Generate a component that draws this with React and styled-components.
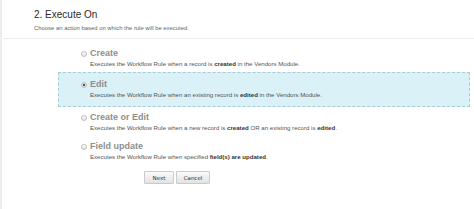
import React, { useState } from "react";
import styled, { createGlobalStyle } from "styled-components";

const GlobalStyle = createGlobalStyle`
  html, body {
    margin: 0;
    padding: 0;
    background: #ffffff;
  }
  body {
    font-family: "Liberation Sans", Arial, sans-serif;
    width: 474px;
    height: 209px;
    overflow: hidden;
  }
`;

const Page = styled.div`
  height: 209px;
  box-sizing: border-box;
  border-left: 2px solid #ededed;
  padding-top: 9px;
`;

const Header = styled.div`
  padding-left: 31px;
  padding-bottom: 6px;
  border-bottom: 1px solid #ececec;
  margin-left: 1px;
`;

const Title = styled.h2`
  margin: 0;
  font-size: 10px;
  line-height: 12px;
  font-weight: normal;
  color: #2a2a2a;
`;

const Subtitle = styled.p`
  margin: 3px 0 0;
  font-size: 5.9px;
  line-height: 8px;
  color: #666;
`;

const Options = styled.div`
  margin: 4px 4px 0 56px;
  display: flex;
  flex-direction: column;
`;

const Option = styled.label`
  display: block;
  position: relative;
  box-sizing: border-box;
  padding: ${(p) => (p.$active ? "6px 0 7px 31px" : "4px 0 3px 31px")};
  border: 1px dashed ${(p) => (p.$active ? "#a9cbd4" : "transparent")};
  background: ${(p) => (p.$active ? "#d9f1f7" : "transparent")};
  cursor: pointer;
`;

const Radio = styled.span`
  position: absolute;
  left: 22px;
  top: ${(p) => (p.$checked ? 9 : 7)}px;
  width: 4px;
  height: 4px;
  border-radius: 50%;
  border: 1px solid #bdbdbd;
  background: ${(p) =>
    p.$checked
      ? "radial-gradient(circle, #555 0 1.2px, #e8e8e8 1.6px)"
      : "linear-gradient(#ffffff, #e4e4e4)"};
`;

const Label = styled.div`
  font-size: 9px;
  line-height: 11px;
  font-weight: bold;
  color: #8e8e8e;
`;

const Desc = styled.div`
  margin-top: 1px;
  font-size: 6.1px;
  line-height: 8px;
  color: #555;

  b {
    color: #333;
  }
`;

const Actions = styled.div`
  display: flex;
  gap: 2px;
  margin: 6px 0 0 142px;
`;

const Button = styled.button`
  width: ${(p) => p.$w}px;
  height: 13px;
  padding: 0;
  border: 1px solid #cbcbcb;
  border-radius: 1px;
  background: linear-gradient(#fbfbfb, #e3e3e3);
  font-family: "DejaVu Sans", Tahoma, sans-serif;
  font-size: 5.5px;
  color: #333;
  cursor: pointer;
`;

const options = [
  {
    id: "create",
    label: "Create",
    desc: (
      <>
        Executes the Workflow Rule when a record is <b>created</b> in the Vendors Module.
      </>
    ),
  },
  {
    id: "edit",
    label: "Edit",
    desc: (
      <>
        Executes the Workflow Rule when an existing record is <b>edited</b> in the Vendors Module.
      </>
    ),
  },
  {
    id: "createOrEdit",
    label: "Create or Edit",
    desc: (
      <>
        Executes the Workflow Rule when a new record is <b>created</b> OR an existing record is{" "}
        <b>edited</b>.
      </>
    ),
  },
  {
    id: "field",
    label: "Field update",
    desc: (
      <>
        Executes the Workflow Rule when specified <b>field(s) are updated</b>.
      </>
    ),
  },
];

const App = () => {
  const [selected, setSelected] = useState("edit");

  return (
    <>
      <GlobalStyle />
      <Page>
        <Header>
          <Title>2. Execute On</Title>
          <Subtitle>Choose an action based on which the rule will be executed.</Subtitle>
        </Header>
        <Options>
          {options.map((o) => (
            <Option key={o.id} $active={selected === o.id} onClick={() => setSelected(o.id)}>
              <Radio $checked={selected === o.id} />
              <Label>{o.label}</Label>
              <Desc>{o.desc}</Desc>
            </Option>
          ))}
        </Options>
        <Actions>
          <Button $w={30}>Next</Button>
          <Button $w={34}>Cancel</Button>
        </Actions>
      </Page>
    </>
  );
};

export default App;
